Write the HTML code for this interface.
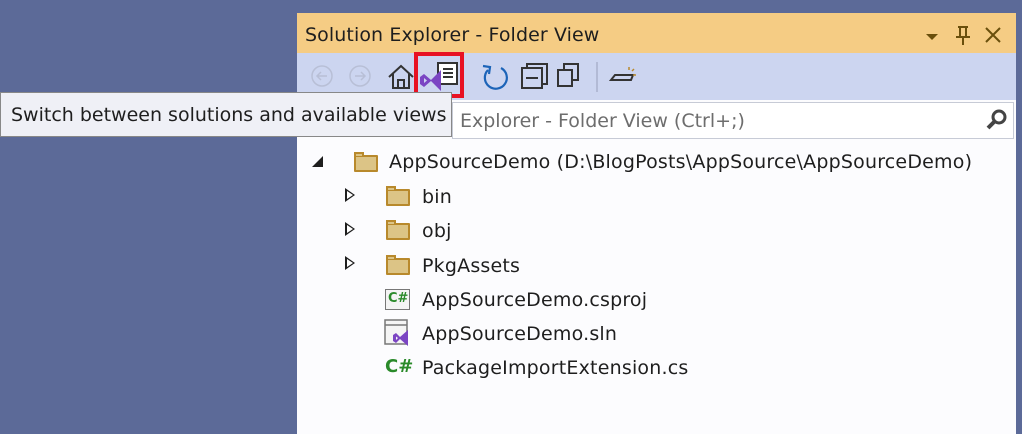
<!DOCTYPE html>
<html><head><style>
body{margin:0;width:1022px;height:434px;background:#5c6a98;position:relative;overflow:hidden;font-family:"DejaVu Sans","Liberation Sans",sans-serif}
.a{position:absolute}
.panel{left:297px;top:13px;width:719px;height:421px;background:#fcfcfe}
.title{left:297px;top:13px;width:719px;height:40px;background:#f5cc84}
.tb{left:297px;top:53px;width:719px;height:47px;background:#ccd5f0}
.search{left:452px;top:102px;width:562px;height:37px;background:#fff;border:1px solid #c7cbd6;box-sizing:border-box}
.tip{left:0;top:92px;width:452px;height:45px;background:#eff0f6;border:1px solid #888;box-sizing:border-box}
.row{position:absolute;font-size:19px;color:#1e1e1e;white-space:nowrap;letter-spacing:0.2px}
.fold{position:absolute;width:24px;height:17px;background:#dcc486;border:2px solid #b8892c;border-radius:1px;box-sizing:border-box}
.fold:before{content:"";position:absolute;left:-2px;top:-5px;width:10px;height:4px;background:#dcc486;border:2px solid #b8892c;border-bottom:none;box-sizing:border-box}
.tri{position:absolute;width:0;height:0;border-top:7px solid transparent;border-bottom:7px solid transparent;border-left:10px solid #1e1e1e}
.tri:after{content:"";position:absolute;left:-8px;top:-4px;border-top:4px solid transparent;border-bottom:4px solid transparent;border-left:6px solid #fff}
</style></head><body>
<div class="a panel"></div>
<div class="a title"></div>
<div class="a" style="left:305px;top:24px;font-size:19px;color:#1e1e1e;letter-spacing:0.1px">Solution Explorer - Folder View</div>
<svg class="a" style="left:920px;top:22px" width="90" height="26">
<path d="M6 12 L18 12 L12 18Z" fill="#6a4f0c"/>
<path d="M38 5 H48 M40 5 V15 M46 5 V15 M36 15 H50 M43 15 V23" stroke="#6a4f0c" stroke-width="2" fill="none"/>
<path d="M66 6 L80 20 M80 6 L66 20" stroke="#6a4f0c" stroke-width="2"/>
</svg>
<div class="a tb"></div>
<svg class="a" style="left:305px;top:58px" width="340" height="40">
<circle cx="17" cy="18" r="10" fill="none" stroke="#b8bfd6" stroke-width="1.5"/><path d="M22 18 H12 M16 14 L12 18 L16 22" stroke="#b8bfd6" stroke-width="1.5" fill="none"/>
<circle cx="55" cy="18" r="10" fill="none" stroke="#b8bfd6" stroke-width="1.5"/><path d="M50 18 H60 M56 14 L60 18 L56 22" stroke="#b8bfd6" stroke-width="1.5" fill="none"/>
<path d="M84 19 L96 8 L108 19 M88 16 V30 H104 V16 M93 30 V22 H99 V30" stroke="#333" stroke-width="2" fill="none"/>
<rect x="133" y="5" width="19" height="21" fill="#fff" stroke="#333" stroke-width="2"/><path d="M138 11 H148 M138 15 H148 M138 19 H148" stroke="#333" stroke-width="2"/>
<path d="M119 16 L126 22 L136 12 V33 L126 23 L119 29 L115 26 V19Z M119 20 V25 L122 22.5Z" fill="#7b45c3" fill-rule="evenodd"/>
<path d="M196 10 A11 11 0 1 1 183 12" stroke="#1c64b8" stroke-width="2.2" fill="none"/><path d="M178 8 L185 9 L184 16" stroke="#1c64b8" stroke-width="2.2" fill="none"/>
<rect x="222" y="6" width="20" height="20" fill="none" stroke="#333" stroke-width="2"/><rect x="217" y="10" width="20" height="20" fill="#ccd5f0" stroke="#333" stroke-width="2"/><path d="M221 20 H233" stroke="#333" stroke-width="2"/>
<rect x="259" y="6" width="14" height="16" fill="none" stroke="#333" stroke-width="2"/><rect x="253" y="12" width="14" height="16" fill="#ccd5f0" stroke="#333" stroke-width="2"/>
<path d="M292 4 V34" stroke="#a9b1cc" stroke-width="1.5"/>
<path d="M306 22 H326 L328 17 H310Z" fill="none" stroke="#333" stroke-width="2"/><path d="M324 9 V12 M327 13 L329 11 M328 17 H331" stroke="#b8892c" stroke-width="1.5"/>
</svg>
<div class="a" style="left:414px;top:52px;width:50px;height:46px;border:4px solid #e81123;box-sizing:border-box"></div>
<div class="a search"></div>
<div class="a" style="left:460px;top:110px;font-size:19px;color:#6d6d6d">Explorer - Folder View (Ctrl+;)</div>
<svg class="a" style="left:985px;top:108px" width="24" height="24"><circle cx="14" cy="9" r="6" fill="none" stroke="#444" stroke-width="3"/><path d="M10 13 L3 20" stroke="#444" stroke-width="4"/></svg>
<div class="a tip"></div>
<div class="a" style="left:11px;top:104px;font-size:19px;color:#1e1e1e">Switch between solutions and available views</div>

<div class="a" style="left:312px;top:156px;width:0;height:0;border-left:11px solid transparent;border-bottom:11px solid #1e1e1e"></div>
<div class="fold" style="left:354px;top:155px"></div>
<div class="row" style="left:389px;top:151px">AppSourceDemo (D:\BlogPosts\AppSource\AppSourceDemo)</div>
<div class="tri" style="left:345px;top:188px"></div><div class="fold" style="left:386px;top:189px"></div><div class="row" style="left:422px;top:186px">bin</div>
<div class="tri" style="left:345px;top:222px"></div><div class="fold" style="left:386px;top:223px"></div><div class="row" style="left:422px;top:220px">obj</div>
<div class="tri" style="left:345px;top:256px"></div><div class="fold" style="left:386px;top:258px"></div><div class="row" style="left:422px;top:255px">PkgAssets</div>
<div class="a" style="left:385px;top:289px;width:25px;height:21px;border:1.5px solid #777;background:#f4f4f4;box-sizing:border-box;color:#2a8a2a;font-size:13px;font-weight:bold;line-height:18px;padding-left:2px">C#</div>
<div class="row" style="left:422px;top:289px">AppSourceDemo.csproj</div>
<svg class="a" style="left:384px;top:319px" width="28" height="28"><rect x="1" y="1" width="22" height="24" fill="#f4f4f4" stroke="#777" stroke-width="1.5"/><path d="M1 6 H23" stroke="#777" stroke-width="1.5"/><path d="M12 14 L16 18 L24 11 V27 L16 20 L12 24 L9 22 V16Z M12 17.5 V21 L14 19Z" fill="#7b45c3" fill-rule="evenodd"/></svg>
<div class="row" style="left:422px;top:323px">AppSourceDemo.sln</div>
<div class="a" style="left:385px;top:356px;color:#2a8a2a;font-size:18px;font-weight:bold">C#</div>
<div class="row" style="left:422px;top:357px">PackageImportExtension.cs</div>
</body></html>
